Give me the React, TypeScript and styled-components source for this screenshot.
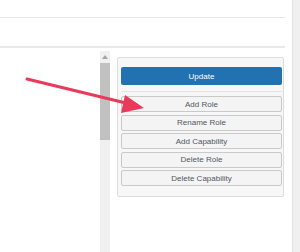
import styled, { createGlobalStyle } from "styled-components";

const GlobalStyle = createGlobalStyle`
  html, body {
    margin: 0;
    padding: 0;
    background: #ffffff;
    overflow: hidden;
  }
  body {
    font-family: "Liberation Sans", Arial, sans-serif;
  }
`;

const actions = ["Add Role", "Rename Role", "Add Capability", "Delete Role", "Delete Capability"];

const App = () => {
  return (
    <Page>
      <GlobalStyle />
      <Main>
        <TopBar />
        <SubBar />
        <Content>
          <LeftPane />
          <ScrollTrack>
            <ScrollArrow>
              <svg width="6" height="4" viewBox="0 0 6 4">
                <path d="M0 4 L3 0 L6 4 Z" fill="#a3a3a3" />
              </svg>
            </ScrollArrow>
            <ScrollThumb />
          </ScrollTrack>
          <Panel>
            <PrimaryButton>Update</PrimaryButton>
            <Divider />
            <ButtonList>
              {actions.map((label) => (
                <ActionButton key={label}>{label}</ActionButton>
              ))}
            </ButtonList>
          </Panel>
        </Content>
      </Main>
      <SideStrip />
      <Annotation width="300" height="252" viewBox="0 0 300 252">
        <line x1="27" y1="79" x2="130" y2="104" stroke="#ea3a5c" strokeWidth="3" strokeLinecap="round" />
        <path d="M144 108 L125 95 L121 113 Z" fill="#ea3a5c" />
      </Annotation>
    </Page>
  );
};

const Page = styled.div`
  position: relative;
  display: flex;
  width: 300px;
  height: 252px;
  overflow: hidden;
`;

const Main = styled.div`
  display: flex;
  flex-direction: column;
  width: 285px;
  margin-right: 7px;
`;

const TopBar = styled.div`
  flex-shrink: 0;
  height: 17px;
  border-bottom: 1px solid #e6e6e6;
`;

const SubBar = styled.div`
  flex-shrink: 0;
  height: 28px;
  border-bottom: 2px solid #e9e9e9;
`;

const Content = styled.div`
  display: flex;
  flex: 1;
  min-height: 0;
  padding-top: 3px;
  align-items: flex-start;
`;

const LeftPane = styled.div`
  width: 100px;
`;

const ScrollTrack = styled.div`
  display: flex;
  flex-direction: column;
  align-self: stretch;
  width: 10px;
  background: #f0f0f0;
`;

const ScrollArrow = styled.div`
  display: flex;
  justify-content: center;
  align-items: center;
  height: 12px;
`;

const ScrollThumb = styled.div`
  width: 10px;
  height: 77px;
  background: #c1c1c1;
`;

const Panel = styled.div`
  display: flex;
  flex-direction: column;
  width: 161px;
  margin-left: 7px;
  margin-top: 6px;
  padding: 9px 1px 10px 3px;
  background: #f7f7f7;
  border: 1px solid #dcdcde;
  border-radius: 2px;
`;

const PrimaryButton = styled.div`
  display: flex;
  align-items: center;
  justify-content: center;
  height: 18px;
  background: #2271b1;
  border-radius: 2px;
  color: #ffffff;
  font-size: 8px;
`;

const Divider = styled.div`
  height: 1px;
  margin: 6px 0 4px;
  background: #e2e2e2;
`;

const ButtonList = styled.div`
  display: flex;
  flex-direction: column;
  gap: 2.5px;
`;

const ActionButton = styled.div`
  display: flex;
  align-items: center;
  justify-content: center;
  height: 16px;
  box-sizing: border-box;
  background: #f4f4f4;
  border: 1px solid #c9c9c9;
  border-radius: 2px;
  color: #50575e;
  font-size: 8px;
`;

const SideStrip = styled.div`
  flex: 1;
  background: #f0f0f0;
  border-left: 1px solid #e2e2e2;
`;

const Annotation = styled.svg`
  position: absolute;
  left: 0;
  top: 0;
  pointer-events: none;
`;

export default App;
